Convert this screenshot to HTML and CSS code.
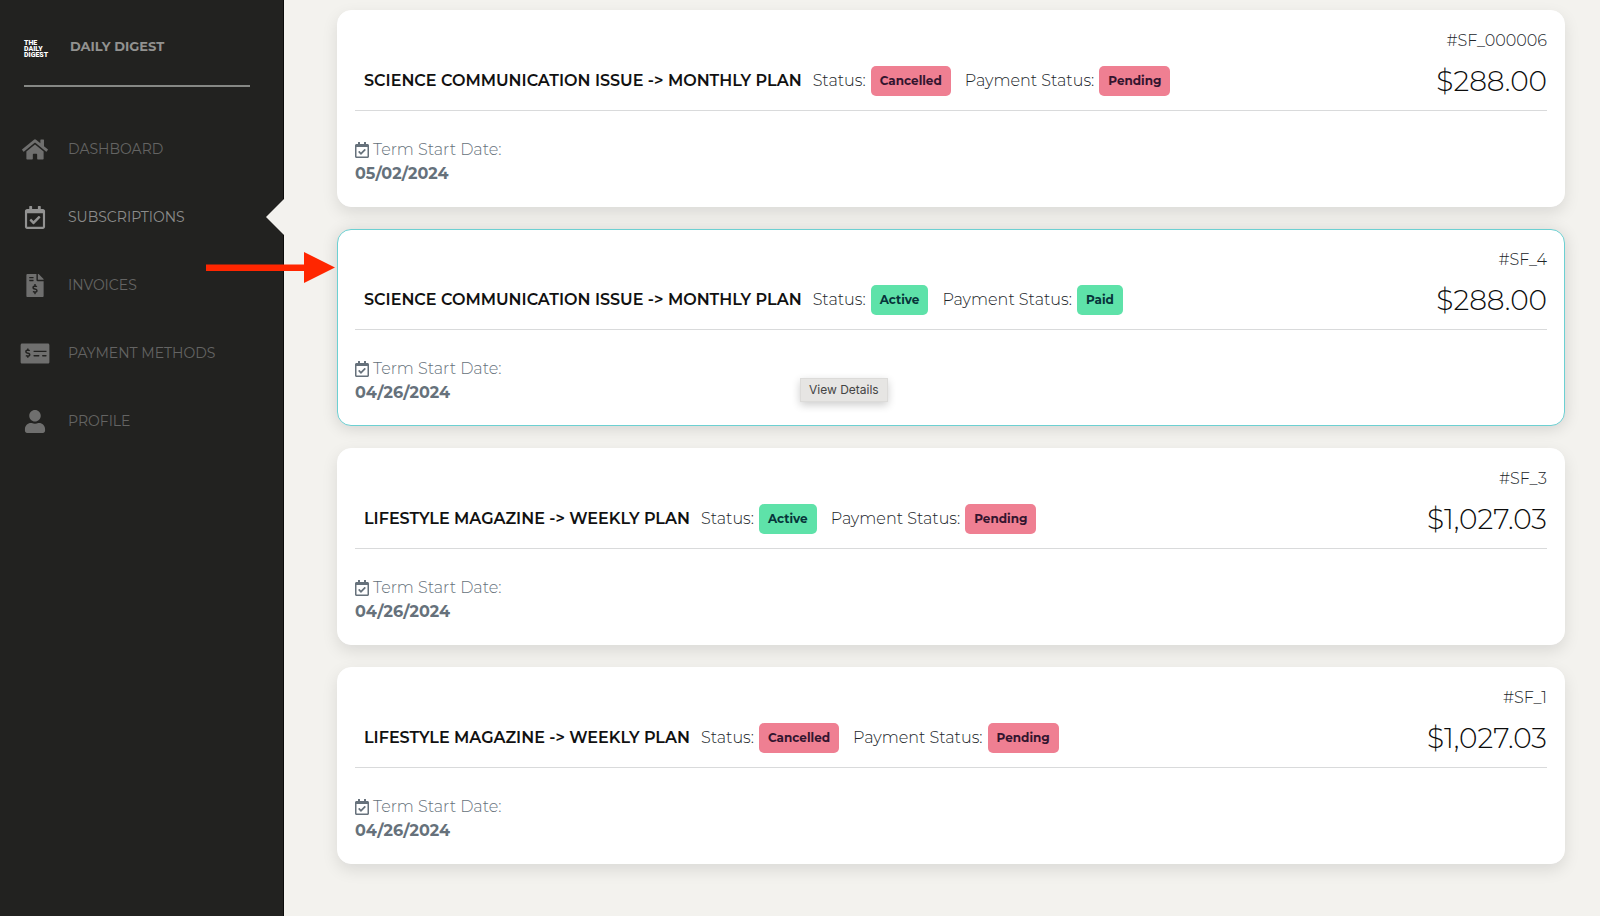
FILE: index.html
```html
<!DOCTYPE html>
<html lang="en">
<head>
<meta charset="utf-8">
<meta name="viewport" content="width=device-width, initial-scale=1">
<title>Subscriptions</title>
<link rel="stylesheet" href="styles.css">
</head>
<body>
<svg class="sprite" aria-hidden="true">
  <symbol id="home" viewBox="0 0 576 512"><path d="M280.37 148.26L96 300.11V464a16 16 0 0 0 16 16l112.06-.29a16 16 0 0 0 15.92-16V368a16 16 0 0 1 16-16h64a16 16 0 0 1 16 16v95.64a16 16 0 0 0 16 16.05L464 480a16 16 0 0 0 16-16V300L295.67 148.26a12.19 12.19 0 0 0-15.3 0zM571.6 251.47L488 182.56V44.05a12 12 0 0 0-12-12h-56a12 12 0 0 0-12 12v72.61L318.47 43a48 48 0 0 0-61 0L4.34 251.47a12 12 0 0 0-1.6 16.9l25.5 31A12 12 0 0 0 45.15 301l235.22-193.74a12.19 12.19 0 0 1 15.3 0L530.9 301a12 12 0 0 0 16.9-1.6l25.5-31a12 12 0 0 0-1.7-16.93z"/></symbol>
  <symbol id="calendar" viewBox="0 0 448 512"><path d="M400 64h-48V12c0-6.627-5.373-12-12-12h-40c-6.627 0-12 5.373-12 12v52H160V12c0-6.627-5.373-12-12-12h-40c-6.627 0-12 5.373-12 12v52H48C21.49 64 0 85.49 0 112v352c0 26.51 21.49 48 48 48h352c26.51 0 48-21.49 48-48V112c0-26.51-21.49-48-48-48zm-6 400H54a6 6 0 0 1-6-6V160h352v298a6 6 0 0 1-6 6zm-52.849-200.65L198.842 404.519c-4.705 4.667-12.303 4.637-16.971-.068l-75.091-75.699c-4.667-4.705-4.637-12.303.068-16.971l22.719-22.536c4.705-4.667 12.303-4.637 16.97.069l44.104 44.461 111.072-110.181c4.705-4.667 12.303-4.637 16.971.068l22.536 22.718c4.667 4.705 4.636 12.303-.069 16.97z"/></symbol>
  <symbol id="invoice" viewBox="0 0 384 512"><path d="M377 105L279.1 7c-4.5-4.5-10.6-7-17-7H256v128h128v-6.1c0-6.3-2.5-12.4-7-16.9zm-153 31V0H24C10.7 0 0 10.7 0 24v464c0 13.3 10.7 24 24 24h336c13.3 0 24-10.7 24-24V160H248c-13.2 0-24-10.8-24-24zM64 72c0-4.42 3.58-8 8-8h80c4.42 0 8 3.58 8 8v16c0 4.42-3.58 8-8 8H72c-4.42 0-8-3.58-8-8V72zm0 80v-16c0-4.42 3.58-8 8-8h80c4.42 0 8 3.58 8 8v16c0 4.42-3.58 8-8 8H72c-4.42 0-8-3.58-8-8zm144 263.88V440c0 4.42-3.58 8-8 8h-16c-4.42 0-8-3.58-8-8v-24.29c-11.29-.58-22.27-4.52-31.37-11.35-3.9-2.93-4.1-8.77-.57-12.14l11.75-11.21c2.77-2.64 6.89-2.76 10.13-.73 3.87 2.42 8.26 3.72 12.82 3.72h28.11c6.5 0 11.8-5.92 11.8-13.19 0-5.95-3.61-11.19-8.77-12.73l-45-13.5c-18.59-5.58-31.58-23.42-31.58-43.39 0-24.52 19.05-44.44 42.67-45.07V232c0-4.42 3.58-8 8-8h16c4.42 0 8 3.58 8 8v24.29c11.29.58 22.27 4.51 31.37 11.35 3.9 2.93 4.1 8.77.57 12.14l-11.75 11.21c-2.77 2.64-6.89 2.76-10.13.73-3.87-2.43-8.26-3.72-12.82-3.72h-28.11c-6.5 0-11.8 5.92-11.8 13.19 0 5.95 3.61 11.19 8.77 12.73l45 13.5c18.59 5.58 31.58 23.42 31.58 43.39 0 24.53-19.05 44.44-42.67 45.07z"/></symbol>
  <symbol id="payment" viewBox="0 0 640 512"><path fill-rule="evenodd" d="M608 32H32C14.33 32 0 46.33 0 64v384c0 17.67 14.33 32 32 32h576c17.67 0 32-14.33 32-32V64c0-17.67-14.33-32-32-32zM176 327.88V344c0 4.42-3.58 8-8 8h-16c-4.42 0-8-3.58-8-8v-16.29c-11.29-.58-22.27-4.52-31.37-11.35-3.9-2.93-4.1-8.77-.57-12.14l11.75-11.21c2.77-2.64 6.89-2.76 10.13-.73 3.87 2.42 8.26 3.72 12.82 3.72h28.11c6.5 0 11.8-5.92 11.8-13.19 0-5.95-3.61-11.19-8.77-12.73l-45-13.5c-18.59-5.58-31.58-23.42-31.58-43.39 0-24.52 19.05-44.44 42.67-45.07V152c0-4.42 3.58-8 8-8h16c4.42 0 8 3.58 8 8v16.29c11.29.58 22.27 4.51 31.37 11.35 3.9 2.93 4.1 8.77.57 12.14l-11.75 11.21c-2.77 2.64-6.89 2.76-10.13.73-3.87-2.43-8.26-3.72-12.82-3.72h-28.11c-6.5 0-11.8 5.92-11.8 13.19 0 5.95 3.61 11.19 8.77 12.73l45 13.5c18.59 5.58 31.58 23.42 31.58 43.39 0 24.53-19.05 44.44-42.67 45.07zM416 312c0 4.42-3.58 8-8 8H296c-4.42 0-8-3.58-8-8v-16c0-4.42 3.58-8 8-8h112c4.42 0 8 3.58 8 8v16zm160 0c0 4.42-3.58 8-8 8h-80c-4.42 0-8-3.58-8-8v-16c0-4.42 3.58-8 8-8h80c4.42 0 8 3.58 8 8v16zm0-96c0 4.42-3.58 8-8 8H296c-4.42 0-8-3.58-8-8v-16c0-4.42 3.58-8 8-8h272c4.42 0 8 3.58 8 8v16z"/></symbol>
  <symbol id="user" viewBox="0 0 448 512"><path d="M224 256c70.7 0 128-57.3 128-128S294.7 0 224 0 96 57.3 96 128s57.3 128 128 128zm89.6 32h-16.7c-22.2 10.2-46.9 16-72.9 16s-50.6-5.8-72.9-16h-16.7C60.2 288 0 348.2 0 422.4V464c0 26.5 21.5 48 48 48h352c26.5 0 48-21.5 48-48v-41.6c0-74.2-60.2-134.4-134.4-134.4z"/></symbol>
</svg>
<div class="app">
  <aside class="sidebar">
    <div class="brand">
      <div class="logo">THE<br>DAILY<br>DIGEST</div>
      <div class="brand-name">DAILY DIGEST</div>
    </div>
    <nav class="nav">
      <a class="nav-item" href="#dashboard"><svg class="nav-icon"><use href="#home"/></svg>DASHBOARD</a>
      <a class="nav-item active" href="#subscriptions" aria-current="page"><svg class="nav-icon"><use href="#calendar"/></svg>SUBSCRIPTIONS</a>
      <a class="nav-item" href="#invoices"><svg class="nav-icon"><use href="#invoice"/></svg>INVOICES</a>
      <a class="nav-item" href="#payment-methods"><svg class="nav-icon"><use href="#payment"/></svg>PAYMENT METHODS</a>
      <a class="nav-item" href="#profile"><svg class="nav-icon"><use href="#user"/></svg>PROFILE</a>
    </nav>
  </aside>
  <main class="content">
    <article class="card">
      <div class="number">#SF_000006</div>
      <div class="summary">
        <h2 class="title">SCIENCE COMMUNICATION ISSUE -&gt; MONTHLY PLAN</h2>
        <div class="status">Status: <span class="badge bad">Cancelled</span></div>
        <div class="status">Payment Status: <span class="badge bad">Pending</span></div>
        <div class="price">$288.00</div>
      </div>
      <div class="term"><div class="term-label"><svg class="term-icon"><use href="#calendar"/></svg>Term Start Date:</div><strong>05/02/2024</strong></div>
    </article>
    <article class="card selected">
      <div class="number">#SF_4</div>
      <div class="summary">
        <h2 class="title">SCIENCE COMMUNICATION ISSUE -&gt; MONTHLY PLAN</h2>
        <div class="status">Status: <span class="badge good">Active</span></div>
        <div class="status">Payment Status: <span class="badge good">Paid</span></div>
        <div class="price">$288.00</div>
      </div>
      <div class="term"><div class="term-label"><svg class="term-icon"><use href="#calendar"/></svg>Term Start Date:</div><strong>04/26/2024</strong></div>
      <div class="tooltip" role="tooltip">View Details</div>
      <svg class="arrow" viewBox="0 0 130 32" aria-hidden="true"><path d="M0 12.500H98V0L129 15.500 98 31V19H0z"/></svg>
    </article>
    <article class="card">
      <div class="number">#SF_3</div>
      <div class="summary">
        <h2 class="title">LIFESTYLE MAGAZINE -&gt; WEEKLY PLAN</h2>
        <div class="status">Status: <span class="badge good">Active</span></div>
        <div class="status">Payment Status: <span class="badge bad">Pending</span></div>
        <div class="price">$1,027.03</div>
      </div>
      <div class="term"><div class="term-label"><svg class="term-icon"><use href="#calendar"/></svg>Term Start Date:</div><strong>04/26/2024</strong></div>
    </article>
    <article class="card">
      <div class="number">#SF_1</div>
      <div class="summary">
        <h2 class="title">LIFESTYLE MAGAZINE -&gt; WEEKLY PLAN</h2>
        <div class="status">Status: <span class="badge bad">Cancelled</span></div>
        <div class="status">Payment Status: <span class="badge bad">Pending</span></div>
        <div class="price">$1,027.03</div>
      </div>
      <div class="term"><div class="term-label"><svg class="term-icon"><use href="#calendar"/></svg>Term Start Date:</div><strong>04/26/2024</strong></div>
    </article>
  </main>
</div>
</body>
</html>
```
FILE: styles.css
```css
* { box-sizing: border-box; }

body {
  margin: 0;
  background: #f3f2ee;
  color: #212529;
  font: 300 16px/24px Montserrat, Inter, "Open Sans", sans-serif;
}

.sprite { display: none; }

.app { display: flex; min-height: 100vh; }

.sidebar {
  flex: 0 0 284px;
  background: #222220;
  border-right: 1px solid #0c0c0b;
}

.brand {
  display: flex;
  align-items: flex-start;
  gap: 20px;
  margin: 38px 33px 28px 24px;
  padding-bottom: 27px;
  border-bottom: 2px solid #868885;
}

.logo {
  width: 26px;
  padding-top: 2px;
  color: #fff;
  font-family: Roboto, sans-serif;
  font-size: 7px;
  font-weight: 900;
  line-height: 6px;
}

.brand-name {
  color: #929290;
  font-size: 13px;
  font-weight: 700;
  line-height: 16px;
}

.nav-item {
  position: relative;
  display: flex;
  align-items: center;
  gap: 18px;
  height: 68px;
  padding-left: 20px;
  color: #646463;
  font-size: 14px;
  font-weight: 400;
  text-decoration: none;
}

.nav-item.active { color: #8c8c8b; }

.nav-icon { width: 30px; height: 23px; fill: #6f6f6e; }
.nav-item.active .nav-icon { fill: #929291; }

.nav-item.active::after {
  content: "";
  position: absolute;
  top: 50%;
  right: -1px;
  border: 18px solid transparent;
  border-left: 0;
  border-right-color: #f3f2ee;
  transform: translateY(-50%);
}

.content {
  flex: 1;
  display: flex;
  flex-direction: column;
  gap: 22px;
  padding: 10px 35px 32px 53px;
}

.card {
  position: relative;
  padding: 18px 17px 20px;
  background: #fff;
  border: 1px solid #fff;
  border-radius: 14px;
  box-shadow: 0 6px 16px rgba(0, 0, 0, 0.1);
}

.card.selected {
  border-color: #6cd0d2;
  box-shadow: 0 2px 16px rgba(0, 0, 0, 0.14);
}

.number { text-align: right; }

.summary {
  display: flex;
  align-items: center;
  height: 58px;
  padding: 0 0 2px 9px;
  border-bottom: 1px solid #d9dadb;
}

.title {
  margin: 0 11px 0 0;
  color: #111;
  font-size: 16px;
  font-weight: 600;
}

.status {
  display: flex;
  align-items: center;
  gap: 5px;
  margin-right: 14px;
}

.badge {
  padding: 3px 9px;
  border-radius: 5px;
  font-size: 12px;
  font-weight: 700;
}

.badge.bad { background: #ef7f92; color: #33152f; }
.badge.good { background: #5ee2a9; color: #07343a; }

.price {
  margin-left: auto;
  color: #0c0c0c;
  font-size: 28px;
}

.term { padding-top: 27px; color: #66717b; }
.term strong { display: block; font-weight: 700; }
.term-label { display: flex; align-items: center; gap: 4px; }
.term-icon { width: 14px; height: 16px; fill: currentColor; }

.tooltip {
  position: absolute;
  top: 148px;
  left: 462px;
  padding: 2px 8px;
  background: #e6e5e3;
  border: 1px solid #dcdbd9;
  color: #444;
  font-family: Inter, sans-serif;
  font-size: 12px;
  font-weight: 400;
  line-height: 18px;
  box-shadow: 0 3px 8px rgba(0, 0, 0, 0.2);
}

.arrow {
  position: absolute;
  top: 22px;
  left: -132px;
  width: 130px;
  height: 32px;
  fill: #ff2600;
}
```
